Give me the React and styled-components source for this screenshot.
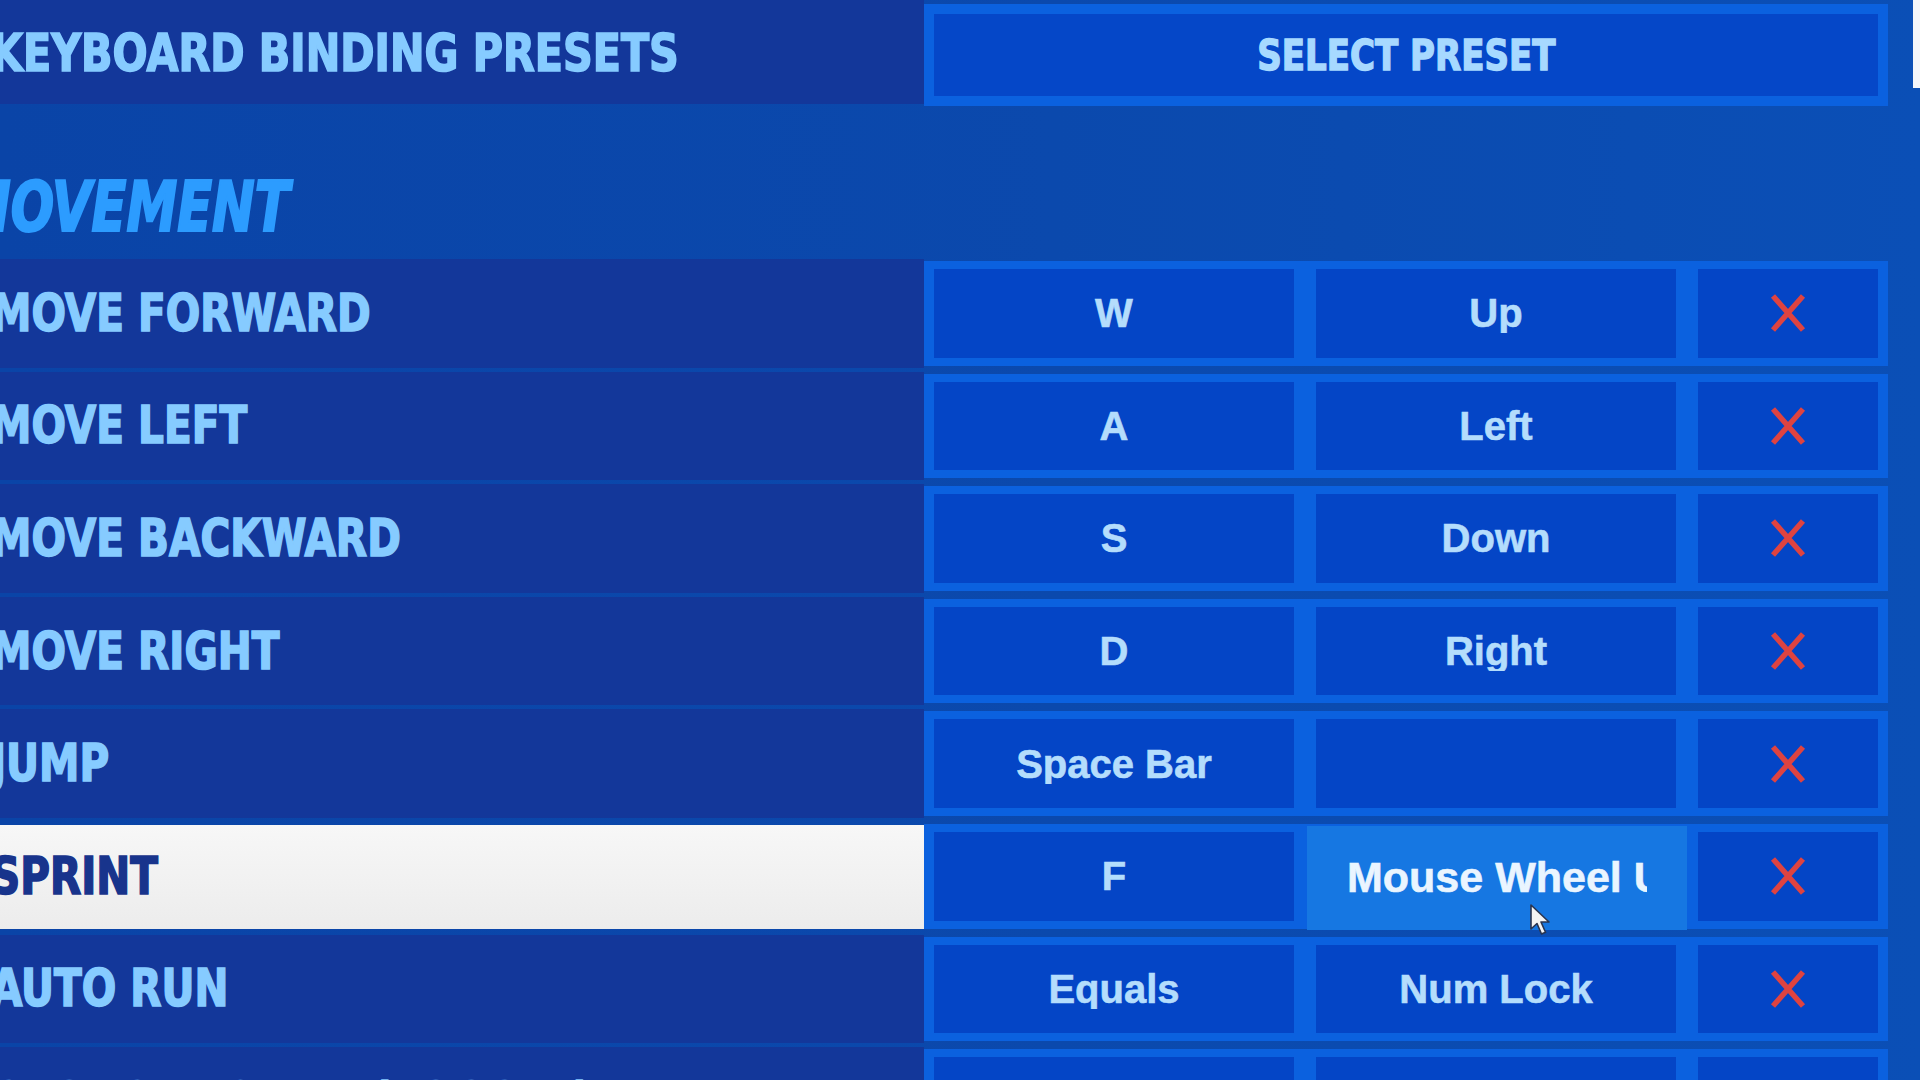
import React from 'react'
import styled, { createGlobalStyle } from 'styled-components'

const GlobalStyle = createGlobalStyle`
  html, body {
    margin: 0;
    padding: 0;
  }
  body {
    width: 1920px;
    height: 1080px;
    overflow: hidden;
    background: #0b49ae;
  }
`

const Screen = styled.div`
  display: flex;
  width: 1920px;
  height: 1080px;
  overflow: hidden;
  background: linear-gradient(90deg, #0a44a7 0%, #0b49ad 55%, #0b4fb6 100%);
`

const Main = styled.div`
  flex: 1;
  display: flex;
  flex-direction: column;
  padding-right: 25px;
`

const Scrollbar = styled.div`
  width: 7px;
  flex-shrink: 0;
`

const Thumb = styled.div`
  height: 88px;
  background: #f4f6fa;
`

const HeaderRow = styled.div`
  display: grid;
  grid-template-columns: 924px 964px;
  height: 110px;
  flex-shrink: 0;
`

const HeaderLabel = styled.div`
  height: 104px;
  display: flex;
  align-items: center;
  padding-top: 2px;
  box-sizing: border-box;
  background: #13379a;
  overflow: hidden;
`

const LabelText = styled.span`
  display: inline-block;
  margin-left: -9px;
  font-family: "DejaVu Sans Condensed", "DejaVu Sans", sans-serif;
  font-stretch: condensed;
  font-weight: 700;
  font-size: 51px;
  line-height: 1;
  white-space: nowrap;
  color: ${p => (p.$active ? '#18348c' : '#86cbff')};
  -webkit-text-stroke: 1.6px ${p => (p.$active ? '#18348c' : '#86cbff')};
  transform: scaleX(${p => p.$scale || 0.885});
  transform-origin: left center;
`

const PresetButton = styled.div`
  margin-top: 4px;
  height: 102px;
  box-sizing: border-box;
  border: 10px solid #0b61df;
  background: #0547c8;
  display: flex;
  align-items: center;
  justify-content: center;
`

const PresetText = styled.span`
  display: inline-block;
  font-family: "DejaVu Sans Condensed", "DejaVu Sans", sans-serif;
  font-stretch: condensed;
  font-weight: 700;
  font-size: 43px;
  line-height: 1;
  color: #a7d9ff;
  -webkit-text-stroke: 1.4px #a7d9ff;
  transform: scaleX(0.88);
`

const Section = styled.div`
  height: 147px;
  flex-shrink: 0;
  padding-top: 62px;
  box-sizing: border-box;
  overflow: hidden;
`

const SectionTitle = styled.h2`
  margin: 0 0 0 -40px;
  display: inline-block;
  font-family: "DejaVu Sans Condensed", "DejaVu Sans", sans-serif;
  font-stretch: condensed;
  font-weight: 700;
  font-style: italic;
  font-size: 70px;
  line-height: 1;
  color: #2c9cff;
  -webkit-text-stroke: 2.2px #2c9cff;
  transform: scaleX(0.81);
  transform-origin: left center;
`

const BindingRow = styled.div`
  display: grid;
  grid-template-columns: 924px 964px;
  height: 112.6px;
  flex-shrink: 0;
`

const LabelCell = styled.div`
  margin: ${p => (p.$active ? '5px 0 4px' : '2px 0')};
  display: flex;
  align-items: center;
  overflow: hidden;
  background: ${p =>
    p.$active ? 'linear-gradient(180deg, #f7f7f7, #ececec)' : '#13379a'};
`

const KeysFrame = styled.div`
  margin: 4px 0;
  padding: 8px 10px;
  background: #0b61df;
  display: grid;
  grid-template-columns: 360px 360px 180px;
  gap: 22px;
`

const KeyCell = styled.div`
  position: relative;
  display: flex;
  align-items: center;
  min-width: 0;
  padding: 0 ${p => (p.$hover ? 40 : 28)}px;
  margin: ${p => (p.$hover ? '-6px -11px -9px -9px' : '0')};
  background: ${p => (p.$hover ? '#1677e2' : '#0445c6')};
  z-index: ${p => (p.$hover ? 1 : 0)};
`

const KeyText = styled.span`
  display: block;
  width: 100%;
  overflow: hidden;
  white-space: nowrap;
  text-align: center;
  font-family: "Liberation Sans", Arial, sans-serif;
  font-weight: 700;
  font-size: ${p => (p.$hover ? 43 : 40)}px;
  line-height: 1;
  color: ${p => (p.$hover ? '#eaf5ff' : '#b4ddfc')};
  -webkit-text-stroke: 0.6px ${p => (p.$hover ? '#eaf5ff' : '#b4ddfc')};
`

const ClearCell = styled.div`
  display: flex;
  align-items: center;
  justify-content: center;
  background: #0445c6;
`

const Pointer = styled.svg`
  position: absolute;
  left: 222px;
  top: 78px;
  width: 22px;
  height: 32px;
`

const ClearIcon = () => (
  <svg width="46" height="46" viewBox="0 0 46 46">
    <path
      d="M8 6 L38 40 M38 6 L8 40"
      stroke="#df4340"
      strokeWidth="5.5"
      fill="none"
    />
  </svg>
)

const Cursor = () => (
  <Pointer viewBox="0 0 22 32">
    <path
      d="M2 1 L2 25 L8 19.5 L12.5 30 L16.5 28.3 L12 18 L20 18 Z"
      fill="#f4f4f4"
      stroke="#2a3550"
      strokeWidth="1.6"
      strokeLinejoin="round"
    />
  </Pointer>
)

const bindings = [
  { label: 'MOVE FORWARD', primary: 'W', secondary: 'Up' },
  { label: 'MOVE LEFT', primary: 'A', secondary: 'Left' },
  { label: 'MOVE BACKWARD', primary: 'S', secondary: 'Down' },
  { label: 'MOVE RIGHT', primary: 'D', secondary: 'Right' },
  { label: 'JUMP', primary: 'Space Bar', secondary: '' },
  { label: 'SPRINT', primary: 'F', secondary: 'Mouse Wheel Up', active: true, hover: true },
  { label: 'AUTO RUN', primary: 'Equals', secondary: 'Num Lock' },
  { label: 'CROUCH / SLIDE (TOGGLE)', primary: 'Left Ctrl', secondary: '' }
]

const App = () => {
  return (
    <>
      <GlobalStyle />
      <Screen>
        <Main>
          <HeaderRow>
            <HeaderLabel>
              <LabelText $scale={0.9}>KEYBOARD BINDING PRESETS</LabelText>
            </HeaderLabel>
            <PresetButton>
              <PresetText>SELECT PRESET</PresetText>
            </PresetButton>
          </HeaderRow>

          <Section>
            <SectionTitle>MOVEMENT</SectionTitle>
          </Section>

          {bindings.map(b => (
            <BindingRow key={b.label}>
              <LabelCell $active={b.active}>
                <LabelText $active={b.active}>{b.label}</LabelText>
              </LabelCell>
              <KeysFrame>
                <KeyCell>
                  <KeyText>{b.primary}</KeyText>
                </KeyCell>
                <KeyCell $hover={b.hover}>
                  <KeyText $hover={b.hover}>{b.secondary}</KeyText>
                  {b.hover && <Cursor />}
                </KeyCell>
                <ClearCell>
                  <ClearIcon />
                </ClearCell>
              </KeysFrame>
            </BindingRow>
          ))}
        </Main>
        <Scrollbar>
          <Thumb />
        </Scrollbar>
      </Screen>
    </>
  )
}

export default App
